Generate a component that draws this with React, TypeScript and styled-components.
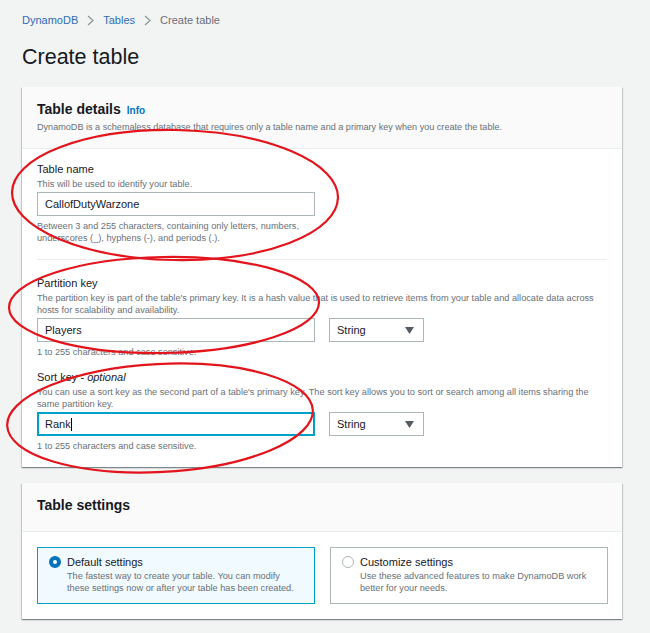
import React from 'react';
import styled, {createGlobalStyle} from 'styled-components';

const Colors = {
  Page: '#f2f3f3',
  Text: '#16191f',
  Muted: '#687078',
  Link: '#0073bb',
  Crumb: '#2e6db4',
  Line: '#eaeded',
  Border: '#aab7b8',
  Focus: '#00a1c9',
  Red: '#e3141c',
};

const GlobalStyle = createGlobalStyle`
  body {
    margin: 0;
    background: ${Colors.Page};
    font-family: "Liberation Sans", Arial, sans-serif;
    color: ${Colors.Text};
  }
`;

const Page = styled.div`
  position: relative;
  box-sizing: border-box;
  width: 650px;
  min-height: 633px;
  padding: 12px 28px 14px 22px;
`;

const Breadcrumbs = styled.nav`
  display: flex;
  align-items: center;
  gap: 9px;
  font-size: 11px;
  line-height: 16px;
`;

const Crumb = styled.span<{current?: boolean}>`
  color: ${(p) => (p.current ? Colors.Muted : Colors.Crumb)};
`;

const Heading = styled.h1`
  margin: 17px 0 18px;
  font-size: 21.5px;
  line-height: 24px;
  font-weight: 400;
`;

const Card = styled.section`
  background: #fff;
  box-shadow: 0 1px 1px 0 rgba(0, 28, 36, 0.3), 1px 1px 1px 0 rgba(0, 28, 36, 0.15),
    -1px 1px 1px 0 rgba(0, 28, 36, 0.15);
  & + & {
    margin-top: 16px;
  }
`;

const CardHeader = styled.header<{tall?: boolean}>`
  background: #fafafa;
  border-bottom: 1px solid ${Colors.Line};
  padding: 13px 15px ${(p) => (p.tall ? '17px' : '15px')};
`;

const TitleRow = styled.div`
  display: flex;
  align-items: baseline;
  gap: 6px;
`;

const CardTitle = styled.h2`
  margin: 0;
  font-size: 14px;
  line-height: 18px;
  font-weight: 700;
`;

const InfoLink = styled.span`
  font-size: 10px;
  font-weight: 700;
  color: ${Colors.Link};
`;

const HeaderDesc = styled.p`
  margin: 3px 0 0;
  font-size: 9.1px;
  line-height: 12px;
  color: ${Colors.Muted};
`;

const CardBody = styled.div<{pad: string}>`
  padding: ${(p) => p.pad};
`;

const Field = styled.div`
  & + & {
    margin-top: 12px;
  }
`;

const Label = styled.div`
  font-size: 11px;
  line-height: 14px;
`;

const Italic = styled.i`
  font-style: italic;
`;

const Desc = styled.div`
  margin-top: 2px;
  font-size: 9.2px;
  line-height: 12px;
  color: ${Colors.Muted};
`;

const ControlRow = styled.div`
  display: flex;
  gap: 14px;
  margin-top: 2px;
`;

const TextBox = styled.div<{focused?: boolean}>`
  box-sizing: border-box;
  width: 278px;
  height: 24px;
  display: flex;
  align-items: center;
  padding-left: ${(p) => (p.focused ? '6px' : '7px')};
  border: ${(p) => (p.focused ? `2px solid ${Colors.Focus}` : `1px solid ${Colors.Border}`)};
  font-size: 11px;
  background: #fff;
`;

const Caret = styled.span`
  display: inline-block;
  width: 1px;
  height: 13px;
  background: #000;
`;

const Select = styled.div`
  box-sizing: border-box;
  width: 95px;
  height: 24px;
  display: flex;
  align-items: center;
  justify-content: space-between;
  padding: 0 9px 0 7px;
  border: 1px solid ${Colors.Border};
  font-size: 11px;
  background: #fff;
`;

const Help = styled.div`
  margin-top: 4px;
  font-size: 9.2px;
  line-height: 12px;
  color: ${Colors.Muted};
`;

const Divider = styled.hr`
  border: 0;
  border-top: 1px solid ${Colors.Line};
  margin: 15px 0 16px;
`;

const Tiles = styled.div`
  display: grid;
  grid-template-columns: 278px 278px;
  gap: 15px;
`;

const Tile = styled.div<{selected?: boolean}>`
  box-sizing: border-box;
  height: 57px;
  display: flex;
  gap: 6px;
  padding: 7px 10px 8px 11px;
  border: 1px solid ${(p) => (p.selected ? Colors.Focus : Colors.Border)};
  background: ${(p) => (p.selected ? '#f1faff' : '#fff')};
`;

const Radio = styled.span<{checked?: boolean}>`
  box-sizing: border-box;
  flex: none;
  width: 12px;
  height: 12px;
  margin-top: 1px;
  border-radius: 50%;
  background: #fff;
  border: ${(p) => (p.checked ? `4px solid ${Colors.Link}` : `1px solid ${Colors.Border}`)};
`;

const TileTitle = styled.div`
  font-size: 11px;
  line-height: 14px;
`;

const TileDesc = styled.div`
  margin-top: 1px;
  font-size: 9.2px;
  line-height: 12px;
  color: ${Colors.Muted};
`;

const Marks = styled.svg`
  position: absolute;
  top: 0;
  left: 0;
  pointer-events: none;
`;

const Chevron = () => (
  <svg width="7" height="11" viewBox="0 0 7 11">
    <polyline points="1,1 6,5.5 1,10" fill="none" stroke="#879596" strokeWidth="1.2"/>
  </svg>
);

const Arrow = () => (
  <svg width="9" height="7" viewBox="0 0 9 7">
    <polygon points="0,0 9,0 4.5,7" fill="#545b64"/>
  </svg>
);

type KeyFieldProps = {
  label: React.ReactNode;
  desc: React.ReactNode;
  value: string;
  focused?: boolean;
};

const KeyField = ({label, desc, value, focused}: KeyFieldProps) => (
  <Field>
    <Label>{label}</Label>
    <Desc>{desc}</Desc>
    <ControlRow>
      <TextBox focused={focused}>
        {value}
        {focused && <Caret/>}
      </TextBox>
      <Select>
        String
        <Arrow/>
      </Select>
    </ControlRow>
    <Help>1 to 255 characters and case sensitive.</Help>
  </Field>
);

const App = () => {
  return (
    <Page>
      <GlobalStyle/>
      <Breadcrumbs>
        <Crumb>DynamoDB</Crumb>
        <Chevron/>
        <Crumb>Tables</Crumb>
        <Chevron/>
        <Crumb current>Create table</Crumb>
      </Breadcrumbs>
      <Heading>Create table</Heading>

      <Card>
        <CardHeader>
          <TitleRow>
            <CardTitle>Table details</CardTitle>
            <InfoLink>Info</InfoLink>
          </TitleRow>
          <HeaderDesc>
            DynamoDB is a schemaless database that requires only a table name and a primary key when you create the table.
          </HeaderDesc>
        </CardHeader>
        <CardBody pad="13px 15px 15px">
          <Field>
            <Label>Table name</Label>
            <Desc>This will be used to identify your table.</Desc>
            <ControlRow>
              <TextBox>CallofDutyWarzone</TextBox>
            </ControlRow>
            <Help>
              Between 3 and 255 characters, containing only letters, numbers,
              <br/>
              underscores (_), hyphens (-), and periods (.).
            </Help>
          </Field>
          <Divider/>
          <KeyField
            label="Partition key"
            desc={<>The partition key is part of the table's primary key. It is a hash value that is used to retrieve items from your table and allocate data across<br/>hosts for scalability and availability.</>}
            value="Players"
          />
          <KeyField
            label={<>Sort key - <Italic>optional</Italic></>}
            desc={<>You can use a sort key as the second part of a table's primary key. The sort key allows you to sort or search among all items sharing the<br/>same partition key.</>}
            value="Rank"
            focused
          />
        </CardBody>
      </Card>

      <Card>
        <CardHeader tall>
          <CardTitle>Table settings</CardTitle>
        </CardHeader>
        <CardBody pad="15px 15px 15px">
          <Tiles>
            <Tile selected>
              <Radio checked/>
              <div>
                <TileTitle>Default settings</TileTitle>
                <TileDesc>
                  The fastest way to create your table. You can modify
                  <br/>
                  these settings now or after your table has been created.
                </TileDesc>
              </div>
            </Tile>
            <Tile>
              <Radio/>
              <div>
                <TileTitle>Customize settings</TileTitle>
                <TileDesc>
                  Use these advanced features to make DynamoDB work
                  <br/>
                  better for your needs.
                </TileDesc>
              </div>
            </Tile>
          </Tiles>
        </CardBody>
      </Card>

      <Marks width="650" height="633" viewBox="0 0 650 633">
        <g fill="none" stroke={Colors.Red} strokeWidth="2.2">
          <ellipse cx="175" cy="195" rx="163" ry="65" transform="rotate(1 175 195)"/>
          <ellipse cx="164" cy="305" rx="155" ry="48" transform="rotate(-1 164 305)"/>
          <ellipse cx="160" cy="418" rx="153" ry="54" transform="rotate(-3 160 418)"/>
        </g>
      </Marks>
    </Page>
  );
};

export default App;
